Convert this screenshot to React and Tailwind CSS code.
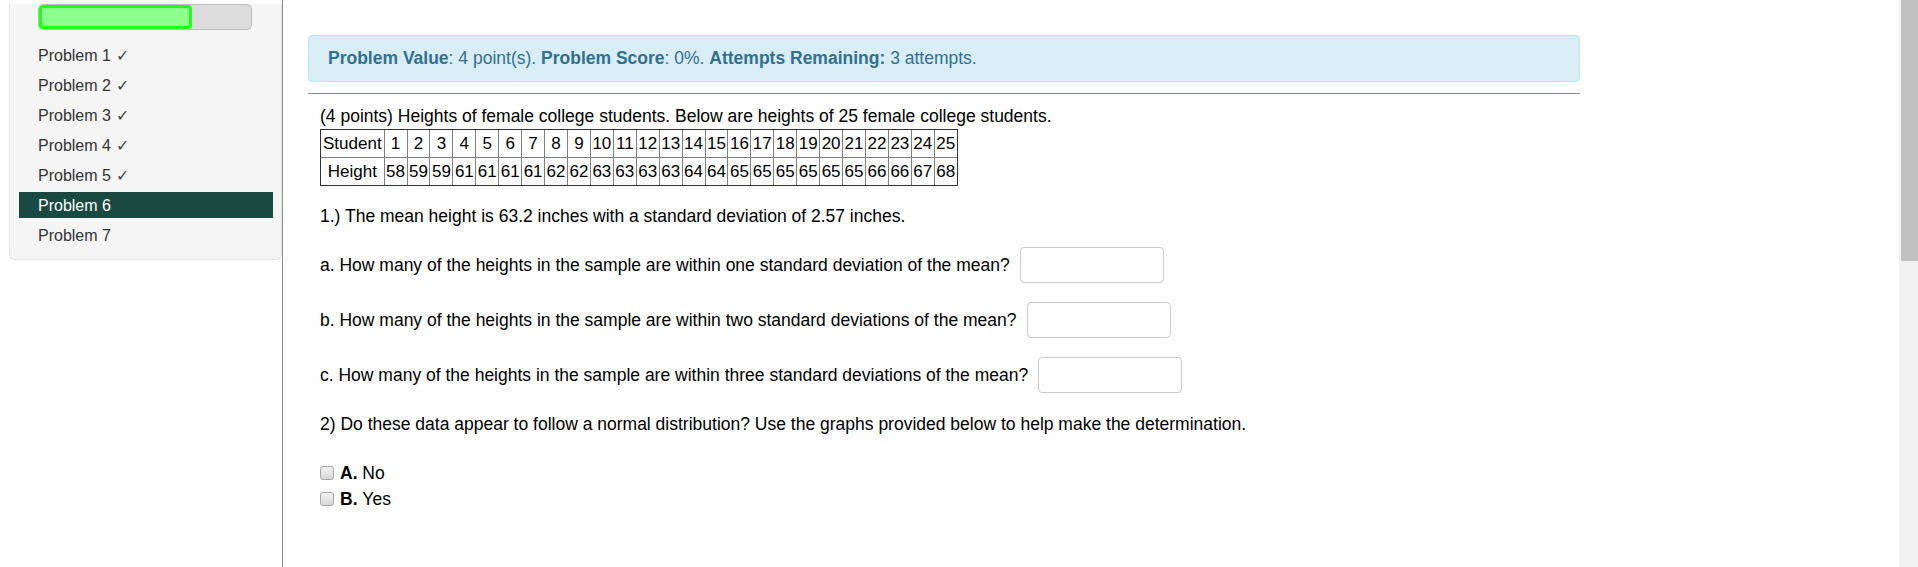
import React from "react";

const students = Array.from({ length: 25 }, (_, i) => i + 1);
const heights = [58, 59, 59, 61, 61, 61, 61, 62, 62, 63, 63, 63, 63, 64, 64, 65, 65, 65, 65, 65, 65, 66, 66, 67, 68];

const problems = [
  { label: "Problem 1", done: true },
  { label: "Problem 2", done: true },
  { label: "Problem 3", done: true },
  { label: "Problem 4", done: true },
  { label: "Problem 5", done: true },
  { label: "Problem 6", active: true },
  { label: "Problem 7" },
];

function Checkbox() {
  return (
    <span className="inline-block w-[14px] h-[14px] rounded-[3px] border border-[#a5a5a5] bg-gradient-to-b from-[#f4f4f4] to-[#d8d8d8] mr-[6px]" />
  );
}

function Question({ text, mt }) {
  return (
    <div className={`flex items-center ${mt}`}>
      <span>{text}</span>
      <input
        type="text"
        className="ml-[10px] w-[144px] h-[36px] rounded-[4px] border border-[#cccccc] bg-white outline-none"
      />
    </div>
  );
}

export default function App() {
  return (
    <div
      className="flex w-full h-[567px] overflow-hidden bg-white text-[16px]"
      style={{ fontFamily: '"Liberation Sans", Arial, sans-serif' }}
    >
      {/* sidebar column */}
      <div className="w-[283px] shrink-0 border-r border-[#888888]">
        <div className="ml-[9px] w-[273px] bg-[#f5f5f5] border border-t-0 border-[#e3e3e3] rounded-b-[6px] pb-[11px]">
          <div className="ml-[28px] mt-[4px] w-[214px] h-[26px] rounded-[5px] border border-[#bdbdbd] bg-[#dcdcdc] overflow-hidden">
            <div className="w-[153px] h-full rounded-[4px] border-[3px] border-[#1dff1d] bg-[#8cff8c]" />
          </div>
          <ul className="mt-[12px] ml-[9px] mr-[8px] flex flex-col gap-[4px]">
            {problems.map((p) => (
              <li
                key={p.label}
                className={
                  p.active
                    ? "h-[26px] pt-[2px] leading-[24px] pl-[19px] bg-[#1a4a3f] text-white"
                    : "h-[26px] pt-[2px] leading-[24px] pl-[19px] text-[#333333]"
                }
              >
                {p.label}
                {p.done && (
                  <span
                    style={{ fontFamily: '"DejaVu Sans", sans-serif' }}
                    className="ml-[5px] text-[16px] font-light text-[#444444]"
                  >
                    ✓
                  </span>
                )}
              </li>
            ))}
          </ul>
        </div>
      </div>

      {/* main column */}
      <div className="ml-[25px] w-[1272px] shrink-0 flex flex-col">
        <div className="mt-[35px] h-[47px] rounded-[4px] border border-[#bce8f1] bg-[#d9edf7] px-[19px] py-[12px] leading-[21px] text-[17.5px] text-[#31708f]">
          <b>Problem Value</b>: 4 point(s). <b>Problem Score</b>: 0%. <b>Attempts Remaining:</b> 3 attempts.
        </div>
        <div className="mt-[11px] border-t border-[#8a8a8a]" />
        <div className="flex-1 bg-[#fefefe] px-[12px] pt-[12px] text-black text-[17.5px] leading-[20px]">
          <p>(4 points) Heights of female college students. Below are heights of 25 female college students.</p>
          <table className="mt-[3px] border-separate border-spacing-0 border border-[#333333] text-[17px] leading-[19px]">
            <tbody>
              <tr>
                <td className="h-[27px] px-[2px] text-center">Student</td>
                {students.map((s) => (
                  <td key={s} className="h-[27px] px-[1.5px] text-center border-l border-[#808080]">
                    {s}
                  </td>
                ))}
              </tr>
              <tr>
                <td className="h-[28px] px-[2px] text-center border-t border-[#808080]">Height</td>
                {heights.map((h, i) => (
                  <td key={i} className="h-[28px] px-[1.5px] text-center border-l border-t border-[#808080]">
                    {h}
                  </td>
                ))}
              </tr>
            </tbody>
          </table>
          <p className="mt-[20px]">1.) The mean height is 63.2 inches with a standard deviation of 2.57 inches.</p>
          <Question mt="mt-[21px]" text="a. How many of the heights in the sample are within one standard deviation of the mean?" />
          <Question mt="mt-[19px]" text="b. How many of the heights in the sample are within two standard deviations of the mean?" />
          <Question mt="mt-[19px]" text="c. How many of the heights in the sample are within three standard deviations of the mean?" />
          <p className="mt-[21px]">
            2) Do these data appear to follow a normal distribution? Use the graphs provided below to help make the determination.
          </p>
          <div className="mt-[29px] flex flex-col gap-[6px]">
            <label className="flex items-center">
              <Checkbox />
              <b>A.</b>&nbsp;No
            </label>
            <label className="flex items-center">
              <Checkbox />
              <b>B.</b>&nbsp;Yes
            </label>
          </div>
        </div>
      </div>

      <div className="flex-1" />

      {/* scrollbar */}
      <div className="w-[19px] shrink-0 bg-[#f1f1f1] pl-[2px]">
        <div className="w-[17px] h-[261px] bg-[#c1c1c1]" />
      </div>
    </div>
  );
}
